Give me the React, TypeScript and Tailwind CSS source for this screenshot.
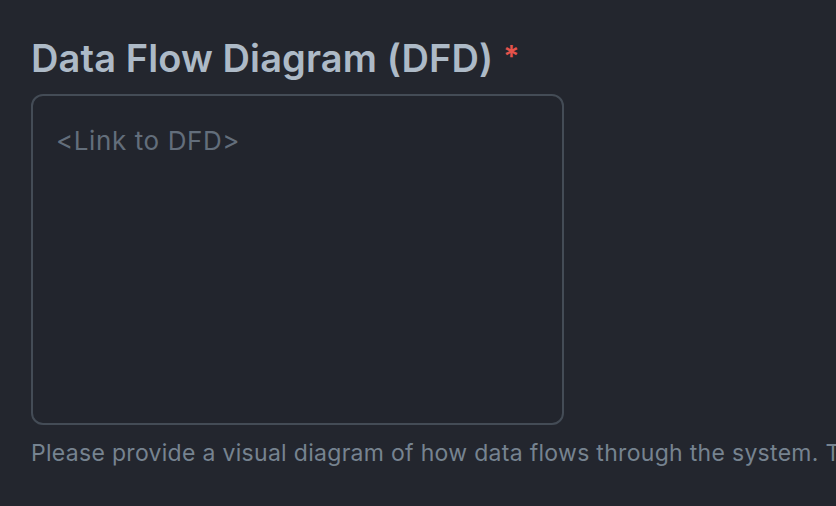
// DFD form field
// heading, textarea and helper text in a dark issue form

const App = () => {
  return (
    <div
      className="h-[506px] w-[836px] overflow-hidden bg-[#23262e] pl-[31px] pt-[33px]"
      style={{ fontFamily: "Inter, 'Noto Sans', sans-serif" }}
    >
      {/* label */}
      <h2 className="flex items-start text-[38px] font-semibold leading-[50px] tracking-[0.1px] text-[#adbac7]">
        Data Flow Diagram (DFD)
        <span className="ml-[10px] mt-[-2px] text-[30px] text-[#e5534b]">*</span>
      </h2>
      {/* textarea */}
      <div className="mt-[11px] h-[331px] w-[533px] rounded-[12px] border-2 border-[#444c56] bg-[#22252d] px-[23px] pt-[28px]">
        <p className="text-[26px] leading-[34px] tracking-[0.6px] text-[#636e7b]">
          {"<Link to DFD>"}
        </p>
      </div>
      {/* helper text */}
      <p className="mt-[12px] whitespace-nowrap text-[23px] leading-[32px] tracking-[0.3px] text-[#768390]">
        Please provide a visual diagram of how data flows through the system. This
        helps reviewers understand the architecture.
      </p>
    </div>
  );
};

export default App;
